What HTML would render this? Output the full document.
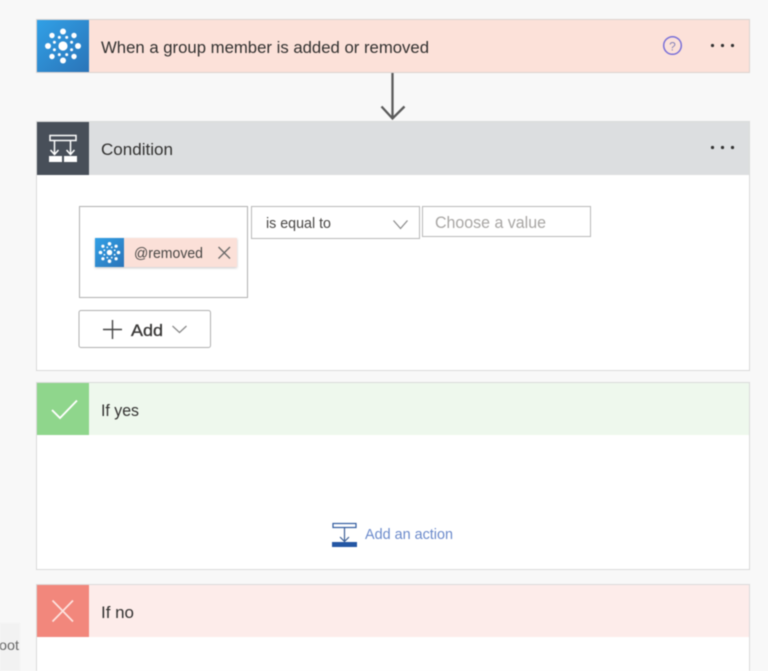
<!DOCTYPE html>
<html lang="en">
<head>
<meta charset="utf-8">
<title>Condition flow</title>
<style>
html,body{margin:0;padding:0;background:#f8f8f8;width:768px;height:671px;overflow:hidden}
svg{display:block;filter:blur(.4px)}
text{font-family:"Liberation Sans",sans-serif}
</style>
</head>
<body>
<svg width="768" height="671" viewBox="0 0 768 671" xmlns="http://www.w3.org/2000/svg">
<defs>
<linearGradient id="b" x1="0" y1="0" x2="1" y2="1"><stop offset="0" stop-color="#31a0e6"/><stop offset="1" stop-color="#2b74b8"/></linearGradient>
<filter id="sh" x="-5%" y="-15%" width="110%" height="135%"><feDropShadow dx="0" dy="1" stdDeviation="1.200" flood-color="#000" flood-opacity=".22"/></filter>
<g id="spark" fill="#fff">
<circle r="4.600"/>
<circle cx="0" cy="-14.500" r="3"/><circle cx="0" cy="14.500" r="3"/><circle cx="-15" cy="0" r="3"/><circle cx="15" cy="0" r="3"/>
<circle cx="-11" cy="-10.500" r="2.700"/><circle cx="11" cy="-10.500" r="2.700"/><circle cx="-11" cy="10.500" r="2.700"/><circle cx="11" cy="10.500" r="2.700"/>
<circle cx="-3.700" cy="-8.600" r="1.500"/><circle cx="3.700" cy="-8.600" r="1.500"/><circle cx="-3.700" cy="8.600" r="1.500"/><circle cx="3.700" cy="8.600" r="1.500"/>
<circle cx="-8.600" cy="-3.700" r="1.500"/><circle cx="8.600" cy="-3.700" r="1.500"/><circle cx="-8.600" cy="3.700" r="1.500"/><circle cx="8.600" cy="3.700" r="1.500"/>
</g>
</defs>

<!-- left cut-off tooltip -->
<rect x="0" y="623" width="20" height="48" fill="#f2f2f2"/>
<text x="-1" y="650" font-size="14" textLength="20" lengthAdjust="spacingAndGlyphs" fill="#666">oot</text>

<!-- Trigger card -->
<rect x="36.500" y="19.500" width="713" height="53" fill="#fce1d9" stroke="#dcd3d0"/>
<rect x="37" y="20" width="52" height="52" fill="url(#b)"/>
<use href="#spark" x="63" y="46"/>
<text x="101" y="53" font-size="17" textLength="328" lengthAdjust="spacingAndGlyphs" fill="#323130">When a group member is added or removed</text>
<circle cx="672.500" cy="45.500" r="8.800" fill="none" stroke="#7a70d8" stroke-width="1.500"/>
<text x="672.500" y="50.500" font-size="12" text-anchor="middle" fill="#8a86b8">?</text>
<g fill="#333"><circle cx="712.500" cy="45.500" r="1.600"/><circle cx="722.500" cy="45.500" r="1.600"/><circle cx="732.500" cy="45.500" r="1.600"/></g>

<!-- Arrow -->
<path d="M392.500 73V118M381.500 106.500L392.500 118.500L404.500 106.500" fill="none" stroke="#5a5a5a" stroke-width="2.300"/>

<!-- Condition card -->
<rect x="36.500" y="121.500" width="713" height="249" fill="#fff" stroke="#dadada"/>
<rect x="37" y="122" width="712" height="53" fill="#dcdee0"/>
<rect x="37" y="122" width="52" height="53" fill="#484f59"/>
<g fill="none" stroke="#fff" stroke-width="1.500">
<rect x="50" y="135.500" width="26" height="5"/>
<path d="M54.500 141V155M70.500 141V155M50.500 150L54.500 154.500L58.500 150M66.500 150L70.500 154.500L74.500 150"/>
</g>
<rect x="49" y="156" width="13" height="6" fill="#fff"/>
<rect x="64" y="156" width="13" height="6" fill="#fff"/>
<text x="101" y="155" font-size="17" textLength="72" lengthAdjust="spacingAndGlyphs" fill="#323130">Condition</text>
<g fill="#333"><circle cx="712.500" cy="147.500" r="1.600"/><circle cx="722.500" cy="147.500" r="1.600"/><circle cx="732.500" cy="147.500" r="1.600"/></g>

<!-- Left operand -->
<rect x="79.500" y="206.500" width="168" height="91" fill="#fff" stroke="#b0b0b0"/>
<rect x="95" y="238" width="142" height="29" fill="#fbe0d8" filter="url(#sh)"/>
<rect x="95" y="238" width="29" height="29" fill="url(#b)"/>
<use href="#spark" transform="translate(109.500 252.500) scale(.6)"/>
<text x="134" y="258" font-size="14.500" textLength="69" lengthAdjust="spacingAndGlyphs" fill="#484644">@removed</text>
<path d="M218.500 247L230 258.500M230 247L218.500 258.500" stroke="#666" stroke-width="1.300" fill="none"/>

<!-- Operator -->
<rect x="251.500" y="206.500" width="168" height="32" fill="#fff" stroke="#b8b8b8"/>
<text x="266" y="228" font-size="14.500" textLength="65" lengthAdjust="spacingAndGlyphs" fill="#484644">is equal to</text>
<path d="M393.500 220.500L400.500 228.500L407.500 220.500" fill="none" stroke="#888" stroke-width="1.200"/>

<!-- Value -->
<rect x="422.500" y="206.500" width="168" height="30" fill="#fff" stroke="#b8b8b8"/>
<text x="435" y="228" font-size="16.500" textLength="111" lengthAdjust="spacingAndGlyphs" fill="#a8a6a4">Choose a value</text>

<!-- Add button -->
<rect x="79" y="310.500" width="131.500" height="37" rx="2" fill="#fff" stroke="#b0b0b0"/>
<path d="M103 329.500H122M112.500 320V339" stroke="#444" stroke-width="1.400" fill="none"/>
<text x="131" y="336" font-size="17" textLength="32" lengthAdjust="spacingAndGlyphs" fill="#3b3a39" stroke="#3b3a39" stroke-width=".35">Add</text>
<path d="M172.500 326L179.500 332.500L186.500 326" fill="none" stroke="#888" stroke-width="1.200"/>

<!-- If yes -->
<rect x="36.500" y="382.500" width="713" height="187" fill="#fff" stroke="#dadada"/>
<rect x="37" y="383" width="712" height="52" fill="#eef8ed"/>
<rect x="37" y="383" width="52" height="52" fill="#8fd68c"/>
<path d="M52 410L60 418L77 400.500" fill="none" stroke="#fff" stroke-width="1.900"/>
<text x="101" y="416" font-size="17" textLength="38" lengthAdjust="spacingAndGlyphs" fill="#323130">If yes</text>

<!-- Add an action -->
<rect x="333" y="523.500" width="23" height="4" fill="#fff" stroke="#2f5a9e" stroke-width="1.200"/>
<path d="M344.500 528V541M340 537L344.500 541.500L349 537" fill="none" stroke="#3d5f96" stroke-width="1.200"/>
<rect x="332" y="542" width="25" height="5" fill="#2457a4"/>
<text x="365" y="539" font-size="14.500" textLength="88" lengthAdjust="spacingAndGlyphs" fill="#6b8acb">Add an action</text>

<!-- If no -->
<rect x="36.500" y="584.500" width="713" height="100" fill="#fff" stroke="#dadada"/>
<rect x="37" y="585" width="712" height="52" fill="#fdecea"/>
<rect x="37" y="585" width="52" height="52" fill="#f2877c"/>
<path d="M52.500 600.500L73 621.500M73 600.500L52.500 621.500" stroke="#fde3df" stroke-width="1.700" fill="none"/>
<text x="101" y="618" font-size="17" textLength="33" lengthAdjust="spacingAndGlyphs" fill="#323130">If no</text>
</svg>
</body>
</html>
